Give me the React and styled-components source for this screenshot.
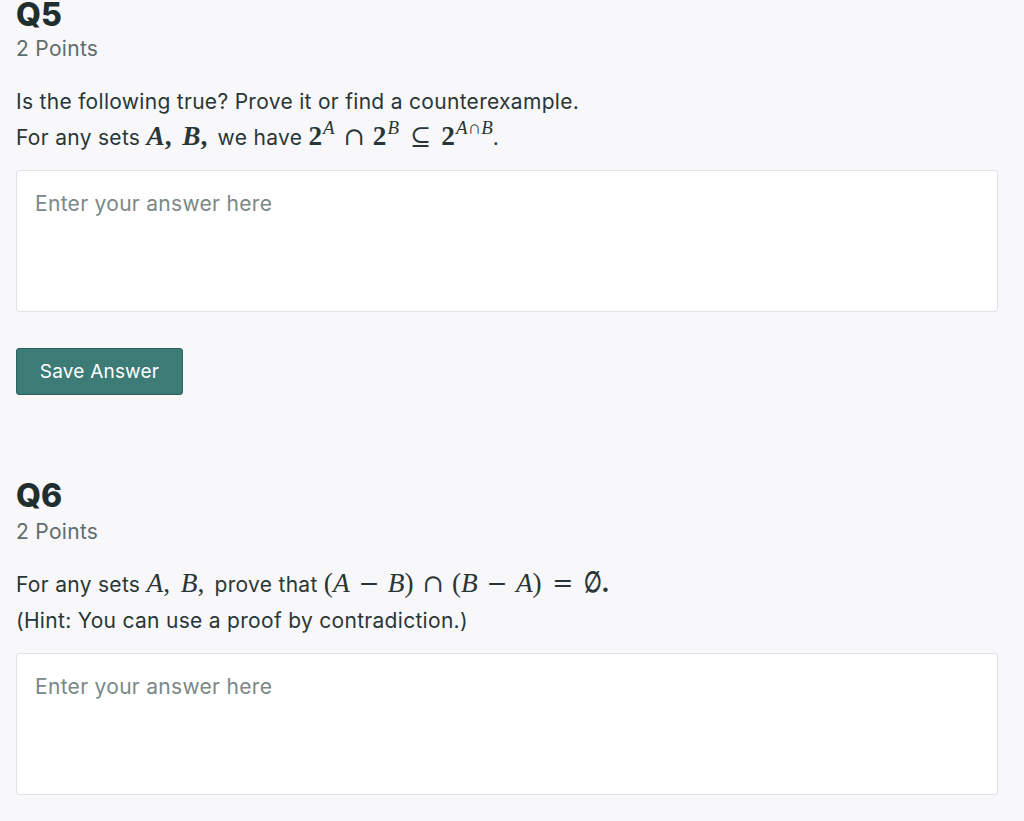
import React from 'react';
import styled, { createGlobalStyle } from 'styled-components';

const sans = 'Inter, "Open Sans", sans-serif';
const serif = '"Liberation Serif", "DejaVu Serif", serif';

const GlobalStyle = createGlobalStyle`
  html, body {
    margin: 0;
    padding: 0;
    background: #f8f8fa;
  }
  body {
    font-family: ${sans};
    color: #263333;
  }
`;

const Page = styled.div`
  padding: 0 26px 0 16px;
`;

const Question = styled.section`
  display: flex;
  flex-direction: column;
  margin-top: ${(p) => p.$top}px;
`;

const Title = styled.h2`
  margin: 0;
  font-size: 32px;
  line-height: 30px;
  font-weight: 800;
  color: #1f2e2e;
`;

const Points = styled.div`
  margin-top: ${(p) => p.$gap || 4}px;
  font-size: 21px;
  line-height: 30px;
  letter-spacing: 0.3px;
  color: #5e6d6d;
`;

const Prompt = styled.div`
  margin-top: 20px;
  font-size: 21px;
  line-height: 36px;
  letter-spacing: 0.3px;
  color: #2a3636;

  p {
    margin: 0;
    height: 36px;
    white-space: nowrap;
  }
`;

const M = styled.span`
  font-family: ${serif};
  font-size: 1.3em;
  line-height: 0;
  letter-spacing: 0;
  font-style: ${(p) => (p.$i ? 'italic' : 'normal')};
  font-weight: ${(p) => (p.$b ? 700 : 400)};
`;

const Comma = styled(M)`
  margin-right: 4px;
`;

const Sup = styled.sup`
  font-family: ${serif};
  font-size: 0.9em;
  font-style: italic;
  letter-spacing: 0;
  line-height: 0;
  vertical-align: 0.6em;
  margin-left: 1px;
`;

const Op = styled.span`
  font-family: "DejaVu Serif", serif;
  font-size: 1.2em;
  line-height: 0;
  letter-spacing: 0;
  margin: 0 ${(p) => (p.$rel ? 0.42 : 0.34)}em;
`;

const EmptySet = styled.span`
  display: inline-block;
  font-family: "DejaVu Serif", serif;
  font-size: 1.08em;
  line-height: 0;
  letter-spacing: 0;
  transform: scaleX(0.7);
  margin: 0 -0.12em;
`;

const Answer = styled.textarea`
  margin-top: 14px;
  box-sizing: border-box;
  width: 100%;
  height: 142px;
  padding: 18px 18px;
  border: 1px solid #dfe2e6;
  border-radius: 3px;
  background: #fff;
  font-family: ${sans};
  font-size: 21px;
  line-height: 30px;
  letter-spacing: 0.3px;
  color: #263333;
  resize: none;
  outline: none;

  &::placeholder {
    color: #7a8888;
  }
`;

const SaveButton = styled.button`
  align-self: flex-start;
  margin-top: 36px;
  width: 167px;
  height: 47px;
  background: #3d7b77;
  border: 1px solid #2c625e;
  border-radius: 3px;
  color: #fff;
  font-family: ${sans};
  font-size: 19px;
  letter-spacing: 0.2px;
  cursor: pointer;
`;

export default function App() {
  return (
    <Page>
      <GlobalStyle />
      <Question $top={0}>
        <Title>Q5</Title>
        <Points>2 Points</Points>
        <Prompt>
          <p>Is the following true? Prove it or find a counterexample.</p>
          <p>
            For any sets <M $i $b>A</M><Comma $b>, </Comma><M $i $b>B</M><Comma $b>,</Comma> we have{' '}
            <M $b>2</M>
            <Sup>A</Sup>
            <Op>∩</Op>
            <M $b>2</M>
            <Sup>B</Sup>
            <Op $rel>⊆</Op>
            <M $b>2</M>
            <Sup>A∩B</Sup>.
          </p>
        </Prompt>
        <Answer placeholder="Enter your answer here" />
        <SaveButton type="button">Save Answer</SaveButton>
      </Question>

      <Question $top={86}>
        <Title>Q6</Title>
        <Points $gap={6}>2 Points</Points>
        <Prompt>
          <p>
            For any sets <M $i>A</M><Comma>, </Comma><M $i>B</M><Comma>,</Comma> prove that{' '}
            <M>(</M><M $i>A</M><Op>−</Op><M $i>B</M><M>)</M>
            <Op>∩</Op>
            <M>(</M><M $i>B</M><Op>−</Op><M $i>A</M><M>)</M>
            <Op $rel>=</Op>
            <M $b><EmptySet>∅</EmptySet>.</M>
          </p>
          <p>(Hint: You can use a proof by contradiction.)</p>
        </Prompt>
        <Answer placeholder="Enter your answer here" />
      </Question>
    </Page>
  );
}
